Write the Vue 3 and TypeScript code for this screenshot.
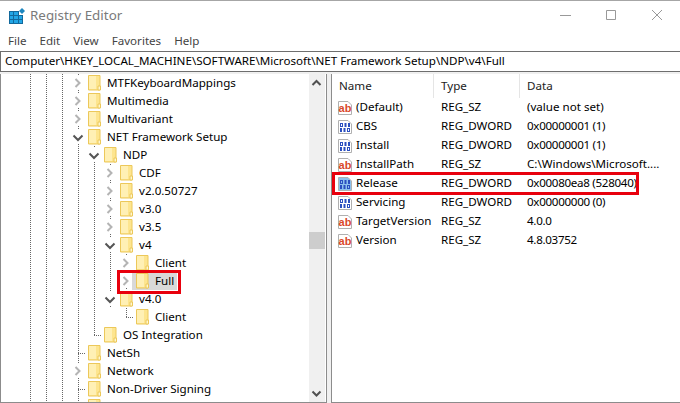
<script setup lang="ts">
type Row = { label: string; level: number; exp: '' | 'closed' | 'open'; guides: number[]; tee?: 'half' | 'through'; selected?: boolean }
const g3 = [0, 1, 2]
const g4 = [0, 1, 2, 3]
const g5 = [0, 1, 2, 3, 4]
const rows: Row[] = [
  { label: 'MTFKeyboardMappings', level: 3, exp: 'closed', guides: g3 },
  { label: 'Multimedia', level: 3, exp: 'closed', guides: g3 },
  { label: 'Multivariant', level: 3, exp: 'closed', guides: g3 },
  { label: 'NET Framework Setup', level: 3, exp: 'open', guides: g3 },
  { label: 'NDP', level: 4, exp: 'open', guides: g4 },
  { label: 'CDF', level: 5, exp: 'closed', guides: g5 },
  { label: 'v2.0.50727', level: 5, exp: 'closed', guides: g5 },
  { label: 'v3.0', level: 5, exp: 'closed', guides: g5 },
  { label: 'v3.5', level: 5, exp: 'closed', guides: g5 },
  { label: 'v4', level: 5, exp: 'open', guides: g5 },
  { label: 'Client', level: 6, exp: 'closed', guides: [0, 1, 2, 3, 4, 5] },
  { label: 'Full', level: 6, exp: 'closed', guides: [0, 1, 2, 3, 4, 5], selected: true },
  { label: 'v4.0', level: 5, exp: 'open', guides: g5 },
  { label: 'Client', level: 6, exp: '', guides: g5, tee: 'half' },
  { label: 'OS Integration', level: 4, exp: '', guides: g4, tee: 'half' },
  { label: 'NetSh', level: 3, exp: '', guides: g3, tee: 'through' },
  { label: 'Network', level: 3, exp: 'closed', guides: g3 },
  { label: 'Non-Driver Signing', level: 3, exp: '', guides: g3, tee: 'through' },
  { label: '', level: 3, exp: '', guides: g3, tee: 'through' },
]
const values = [
  { name: '(Default)', kind: 'sz', type: 'REG_SZ', data: '(value not set)' },
  { name: 'CBS', kind: 'bin', type: 'REG_DWORD', data: '0x00000001 (1)', num: true },
  { name: 'Install', kind: 'bin', type: 'REG_DWORD', data: '0x00000001 (1)', num: true },
  { name: 'InstallPath', kind: 'sz', type: 'REG_SZ', data: 'C:\\Windows\\Microsoft....' },
  { name: 'Release', kind: 'bin', type: 'REG_DWORD', data: '0x00080ea8 (528040)', sel: true, num: true },
  { name: 'Servicing', kind: 'bin', type: 'REG_DWORD', data: '0x00000000 (0)', num: true },
  { name: 'TargetVersion', kind: 'sz', type: 'REG_SZ', data: '4.0.0', num: true },
  { name: 'Version', kind: 'sz', type: 'REG_SZ', data: '4.8.03752', num: true },
]
const menus = ['File', 'Edit', 'View', 'Favorites', 'Help']
</script>

<template>
  <div class="win">
    <header class="title">
      <svg class="logo" width="16" height="16" viewBox="0 0 16 16">
        <path fill="#12699c" d="M0 3h10v4h4v9H0z" />
        <path fill="#22a6e6" d="M1 4h3v3H1zM5 4h4v3H5zM1 8h3v3H1zM5 8h4v3H5zM10 8h3v3h-3zM1 12h3v3H1zM5 12h4v3H5zM10 12h3v3h-3z" />
        <path fill="#1d86bf" d="M13 0l3 3-3 3-3-3z" />
      </svg>
      <span class="title-text">Registry Editor</span>
      <div class="caption">
        <svg width="46" height="29" viewBox="0 0 46 29"><path d="M18 14.500h11" stroke="#999" fill="none" /></svg>
        <svg width="46" height="29" viewBox="0 0 46 29"><path d="M18.500 9.500h9v9h-9z" stroke="#999" fill="none" /></svg>
        <svg width="46" height="29" viewBox="0 0 46 29"><path d="M18 9l10 10M28 9L18 19" stroke="#999" fill="none" /></svg>
      </div>
    </header>
    <nav class="menu"><span v-for="m in menus" :key="m">{{ m }}</span></nav>
    <div class="address">Computer\HKEY_LOCAL_MACHINE\SOFTWARE\Microsoft\NET Framework Setup\NDP\v4\Full</div>
    <main class="panes">
      <section class="tree-pane">
        <div class="tree">
          <div v-for="(r, i) in rows" :key="i" class="row">
            <span v-for="c in r.level" :key="c" class="cell" :class="{ guide: r.guides.includes(c - 1) }"></span>
            <span class="cell" :class="{ half: r.tee === 'half', through: r.tee === 'through', stub: r.exp !== '' }">
              <svg v-if="r.exp === 'closed'" width="16" height="18" viewBox="0 0 16 18"><path d="M3.500 5l4 4-4 4" fill="none" stroke="#b4b4b4" stroke-width="2" /></svg>
              <svg v-else-if="r.exp === 'open'" width="16" height="18" viewBox="0 0 16 18"><path d="M1.500 7.500l4.500 4.500 4.500-4.500" fill="none" stroke="#555" stroke-width="2" /></svg>
            </span>
            <span class="item" :class="{ selected: r.selected }">
              <svg class="folder" width="13" height="16" viewBox="0 0 13 16">
                <path d="M.5.5h11.500v14.500H.5z" fill="#fde58f" stroke="#ecc85a" />
                <path d="M1 1h7v13H1z" fill="#fff0b5" />
                <path d="M10 11h2.500v4H10z" fill="#fff7d0" stroke="#ecc85a" />
              </svg>
              <span class="label">{{ r.label }}</span>
            </span>
          </div>
        </div>
        <div class="scrollbar">
          <svg width="16" height="17" viewBox="0 0 16 17"><path d="M3.500 11l4-4 4 4" fill="none" stroke="#505050" stroke-width="2" /></svg>
          <div class="track"><div class="thumb"></div></div>
          <svg width="16" height="17" viewBox="0 0 16 17"><path d="M3.500 6.500l4 4 4-4" fill="none" stroke="#505050" stroke-width="2" /></svg>
        </div>
      </section>
      <section class="list-pane">
        <div class="list-head">
          <span class="h-name">Name</span><span class="h-type">Type</span><span class="h-data">Data</span>
        </div>
        <div v-for="v in values" :key="v.name" class="vrow">
          <span class="c-name">
            <svg class="vicon" width="16" height="16" viewBox="0 0 16 16">
              <path d="M1.500 1.500h9.500l3.500 3.500v9.500h-13z" :fill="v.sel ? '#8cc0ec' : '#fff'" stroke="#b0b0b0" />
              <text v-if="v.kind === 'sz'" x="8" y="11.500" text-anchor="middle" class="ab">ab</text>
              <g v-else fill="#2a4fc0">
                <path d="M3 4h3v4H3zM4 5v2h1V5zM7.500 4h2v4h-2zM11 4h2v4h-2zM3 9h2v4H3zM6.500 9h2v4h-2zM10 9h3v4h-3zM11 10v2h1v-2z" fill-rule="evenodd" />
              </g>
            </svg>
            <span class="vtext">{{ v.name }}</span>
          </span>
          <span class="c-type vtext">{{ v.type }}</span>
          <span class="vtext" :class="{ num: v.num }">{{ v.data }}</span>
        </div>
      </section>
    </main>
    <div class="mark mark-full"></div>
    <div class="mark mark-release"></div>
  </div>
</template>

<style>
html, body { margin: 0; background: #fff; overflow: hidden; }
</style>

<style scoped>
.win {
  position: relative;
  width: 680px;
  height: 403px;
  box-sizing: border-box;
  background: #fff;
  border-top: 1px solid #a6a6a6;
  font-family: "Noto Sans", "Open Sans", sans-serif;
  font-size: 11.6px;
  color: #000;
  overflow: hidden;
  display: flex;
  flex-direction: column;
}
.title { height: 29px; display: flex; align-items: center; padding-left: 9px; flex: none; }
.logo { margin-right: 5px; }
.title-text { color: #7a7a7a; font-size: 13.4px; padding-bottom: 2px; }
.caption { margin-left: auto; display: flex; }
.menu { height: 21px; display: flex; gap: 13px; padding-left: 8px; align-items: center; flex: none; color: #444; }
.address {
  height: 21px; line-height: 18px; flex: none; box-sizing: border-box;
  border: 1px solid #6e6e6e; border-right: 0;
  padding-left: 4px; white-space: nowrap; overflow: hidden;
}
.panes { flex: 1; display: flex; min-height: 0; background: #f0f0f0; padding-top: 2px; gap: 4px; }
.tree-pane {
  width: 327px; flex: none; display: flex; background: #fff; box-sizing: border-box;
  border-left: 1px solid #8c8c8c; border-right: 1px solid #8c8c8c; border-bottom: 1px solid #8c8c8c; overflow: hidden;
}
.tree { flex: 1; overflow: hidden; margin-left: 23px; }
.row { height: 18px; display: flex; align-items: center; white-space: nowrap; }
.cell { width: 16px; height: 18px; flex: none; display: block; }
.cell svg { display: block; }
.guide { background: repeating-linear-gradient(#666 0 1px, transparent 1px 2px) 6px 0 / 1px 100% no-repeat; }
.half {
  background:
    repeating-linear-gradient(90deg, #666 0 1px, transparent 1px 2px) 6px 9px / 8px 1px no-repeat,
    repeating-linear-gradient(#666 0 1px, transparent 1px 2px) 6px 0 / 1px 9px no-repeat;
}
.through {
  background:
    repeating-linear-gradient(90deg, #666 0 1px, transparent 1px 2px) 6px 9px / 8px 1px no-repeat,
    repeating-linear-gradient(#666 0 1px, transparent 1px 2px) 6px 0 / 1px 100% no-repeat;
}
.stub {
  background:
    repeating-linear-gradient(#666 0 1px, transparent 1px 2px) 6px 0 / 1px 2px no-repeat,
    repeating-linear-gradient(#666 0 1px, transparent 1px 2px) 6px 16px / 1px 2px no-repeat;
}
.item { display: flex; align-items: center; height: 18px; }
.item.selected { background: #d9d9d9; margin-left: -4px; padding-left: 4px; padding-right: 3px; }
.folder { flex: none; margin-right: 6px; }
.label { line-height: 17px; padding-bottom: 2px; }
.scrollbar { width: 16px; margin-right: 1px; flex: none; background: #f0f0f0; display: flex; flex-direction: column; }
.track { flex: 1; padding-top: 141px; }
.thumb { height: 17px; background: #cdcdcd; }
.list-pane { flex: 1; background: #fff; border-left: 1px solid #8c8c8c; border-bottom: 1px solid #8c8c8c; overflow: hidden; }
.list-head { height: 24px; display: flex; color: #222; }
.list-head span { box-sizing: border-box; padding: 4px 0 0 7px; border-right: 1px solid #e5e5e5; flex: none; }
.h-name { width: 102px; }
.h-type { width: 86px; }
.list-head .h-data { border-right: 0; }
.vrow { height: 19px; display: flex; align-items: center; white-space: nowrap; }
.vtext { padding-bottom: 2px; }
.num { letter-spacing: -0.3px; }
.c-name { width: 109px; padding-left: 5px; flex: none; box-sizing: border-box; display: flex; align-items: center; }
.c-type { width: 86px; flex: none; }
.vicon { margin-right: 3px; flex: none; }
.ab { font-size: 11px; font-weight: 700; fill: #d9482b; font-family: "Liberation Sans", sans-serif; }
.mark { position: absolute; border: 3px solid #e8000d; box-sizing: border-box; pointer-events: none; }
.mark-full { left: 117px; top: 269px; width: 64px; height: 24px; }
.mark-release { left: 332px; top: 171px; width: 307px; height: 23px; }
</style>
